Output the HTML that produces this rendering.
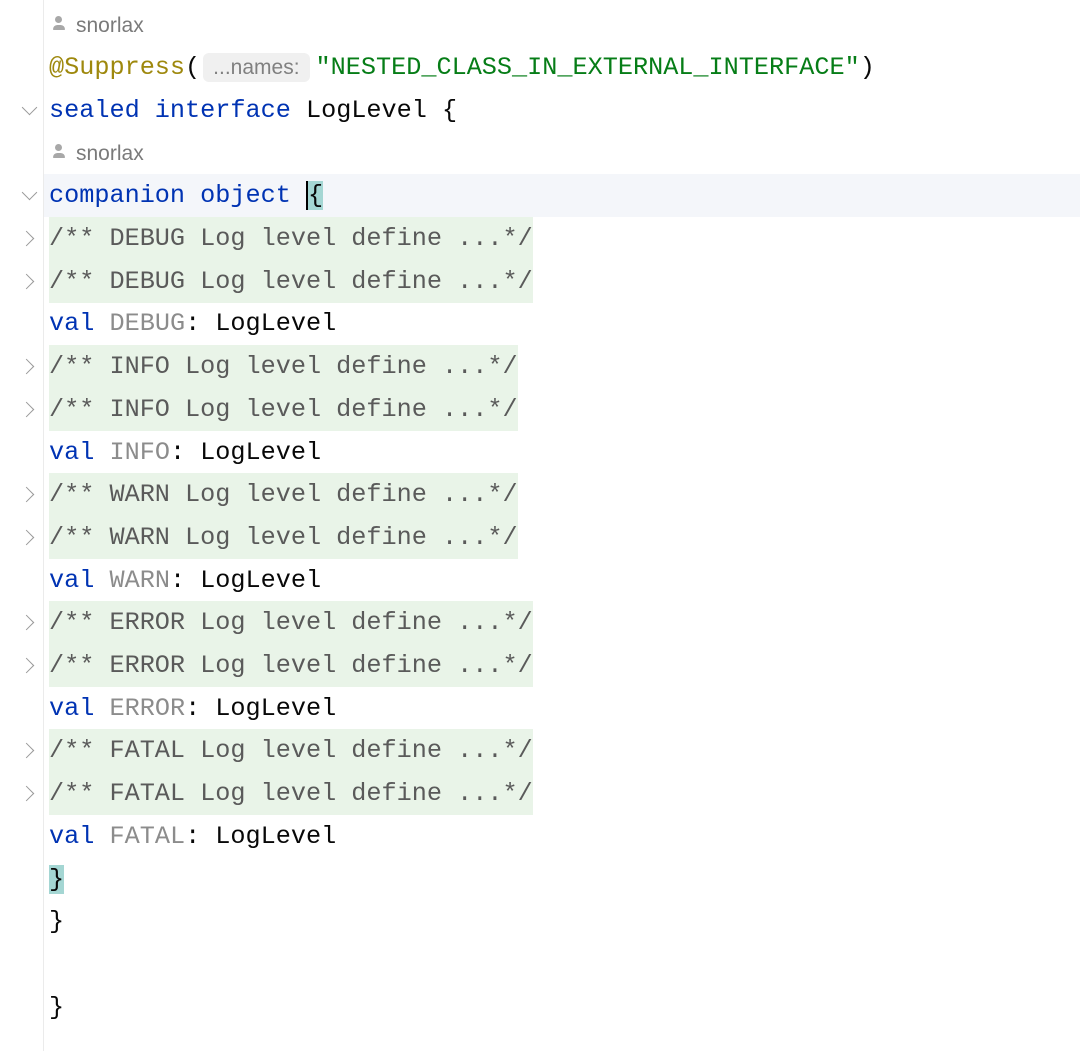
<!DOCTYPE html>
<html><head><meta charset="utf-8"><style>
html,body{margin:0;padding:0;background:#fff;width:1080px;height:1051px;overflow:hidden;position:relative}
.gut{position:absolute;left:43px;top:0;width:1px;height:1051px;background:#ebebeb}
.cur{position:absolute;left:44px;top:174px;width:1036px;height:43px;background:#f4f6fa}
.ln{position:absolute;left:49px;height:43px;line-height:43px;font-family:"Liberation Mono",monospace;font-size:25.2px;white-space:pre;color:#080808}
.au{position:absolute;left:76px;height:43px;line-height:43px;font-family:"Liberation Sans",sans-serif;font-size:21px;color:#7a7a7a}
.k{color:#0033b3}.s{color:#067d17}.a{color:#9e880d}.g{color:#8c8c8c}
.c{background:#e9f4e8;color:#5a5a5a;display:inline-block}
.hint{font-family:"Liberation Sans",sans-serif;font-size:21px;color:#808080;background:#f0f0f0;border-radius:6px;padding:3px 10px;margin:0 6px 0 3px}
.hl{background:#a4d6d3}
.ar{position:absolute;left:24px;width:10px;height:10px;border-right:1.5px solid #9a9a9a;border-bottom:1.5px solid #9a9a9a}
.dn{transform:rotate(45deg)}.rt{transform:rotate(-45deg)}
.ph{position:absolute;left:55px;width:7px;height:7px;border-radius:50%;background:#a8a8a8}
.pb{position:absolute;left:53px;width:12px;height:5px;border-radius:6px 6px 1px 1px;background:#a8a8a8}
</style></head><body>
<div class="cur"></div>
<div class="gut"></div>
<div class="ph" style="top:16px"></div><div class="pb" style="top:25px"></div>
<div class="au" style="top:4px">snorlax</div>
<div class="ln" style="top:46px"><span class="a">@Suppress</span>(<span class="hint">...names:</span><span class="s">"NESTED_CLASS_IN_EXTERNAL_INTERFACE"</span>)</div>
<div class="ln" style="top:89px"><span class="k">sealed interface</span> LogLevel {</div>
<div class="ph" style="top:144px"></div><div class="pb" style="top:153px"></div>
<div class="au" style="top:132px">snorlax</div>
<div class="ln" style="top:174px"><span class="k">companion object</span> <span class="hl" style="border-left:2px solid #000">{</span></div>
<div class="ln" style="top:217px"><span class="c">/** DEBUG Log level define ...*/</span></div>
<div class="ln" style="top:260px"><span class="c">/** DEBUG Log level define ...*/</span></div>
<div class="ln" style="top:302px"><span class="k">val</span> <span class="g">DEBUG</span>: LogLevel</div>
<div class="ln" style="top:345px"><span class="c">/** INFO Log level define ...*/</span></div>
<div class="ln" style="top:388px"><span class="c">/** INFO Log level define ...*/</span></div>
<div class="ln" style="top:431px"><span class="k">val</span> <span class="g">INFO</span>: LogLevel</div>
<div class="ln" style="top:473px"><span class="c">/** WARN Log level define ...*/</span></div>
<div class="ln" style="top:516px"><span class="c">/** WARN Log level define ...*/</span></div>
<div class="ln" style="top:559px"><span class="k">val</span> <span class="g">WARN</span>: LogLevel</div>
<div class="ln" style="top:601px"><span class="c">/** ERROR Log level define ...*/</span></div>
<div class="ln" style="top:644px"><span class="c">/** ERROR Log level define ...*/</span></div>
<div class="ln" style="top:687px"><span class="k">val</span> <span class="g">ERROR</span>: LogLevel</div>
<div class="ln" style="top:729px"><span class="c">/** FATAL Log level define ...*/</span></div>
<div class="ln" style="top:772px"><span class="c">/** FATAL Log level define ...*/</span></div>
<div class="ln" style="top:815px"><span class="k">val</span> <span class="g">FATAL</span>: LogLevel</div>
<div class="ln" style="top:858px"><span class="hl">}</span></div>
<div class="ln" style="top:900px">}</div>
<div class="ln" style="top:986px">}</div>
<div class="ar dn" style="top:102px"></div>
<div class="ar dn" style="top:187px"></div>
<div class="ar rt" style="top:233px;left:21px"></div>
<div class="ar rt" style="top:276px;left:21px"></div>
<div class="ar rt" style="top:361px;left:21px"></div>
<div class="ar rt" style="top:404px;left:21px"></div>
<div class="ar rt" style="top:489px;left:21px"></div>
<div class="ar rt" style="top:532px;left:21px"></div>
<div class="ar rt" style="top:617px;left:21px"></div>
<div class="ar rt" style="top:660px;left:21px"></div>
<div class="ar rt" style="top:745px;left:21px"></div>
<div class="ar rt" style="top:788px;left:21px"></div>
</body></html>
